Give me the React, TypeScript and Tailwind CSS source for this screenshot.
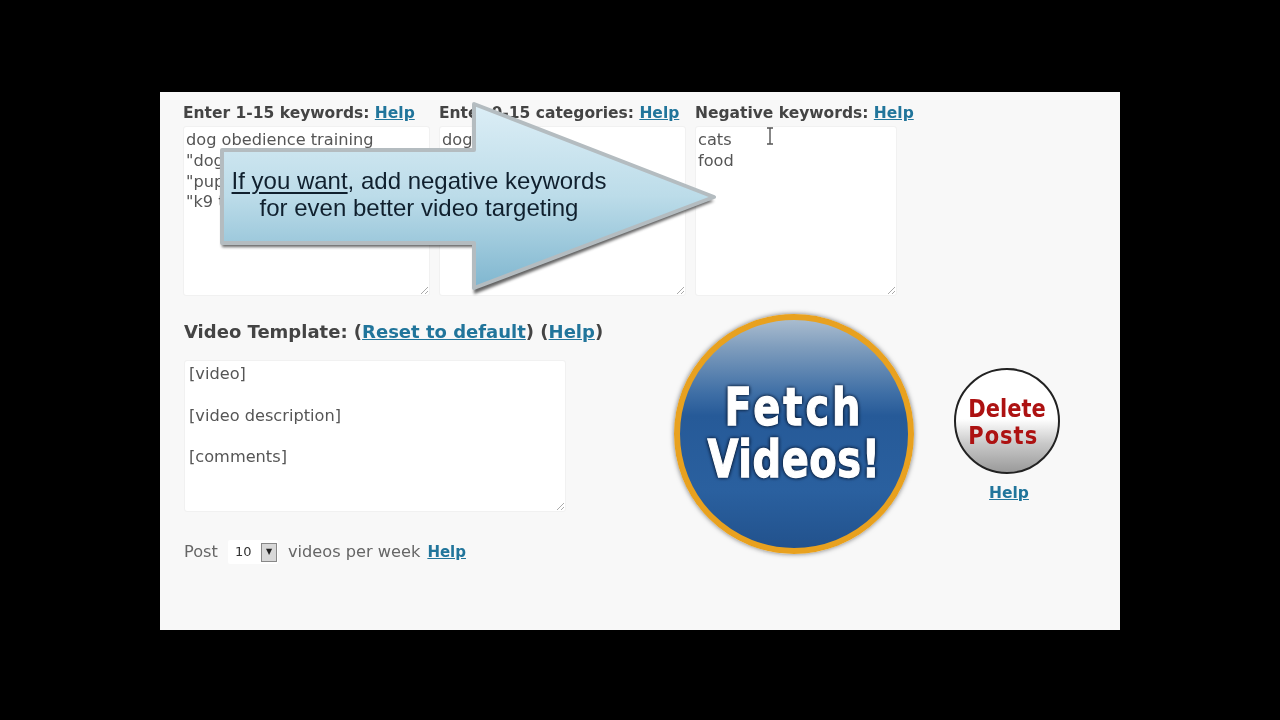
const HelpLink = ({ className = '' }: { className?: string }) => (
  <a className={`text-[#21759b] underline ${className}`}>Help</a>
)

const ResizeGrip = () => (
  <svg width="10" height="10" viewBox="0 0 10 10" className="absolute bottom-[1px] right-[1px]">
    <path d="M2 9 L9 2 M6 9 L9 6" stroke="#aaa" strokeWidth="1" />
  </svg>
)

const KeywordBox: React.FC<{ label: string, value: string, width: string }> = ({ label, value, width }) => (
  <div className={`flex flex-col ${width}`}>
    <div className="h-[24px] text-[15.5px] font-bold leading-[22px] whitespace-nowrap text-[#444]">
      {label}: <HelpLink />
    </div>
    <div className="relative h-[170px] w-full">
      <textarea
        readOnly
        defaultValue={value}
        className="block h-full w-full resize-none rounded-[3px] border border-[#f1f1f1] bg-white px-[2px] py-[3px] text-[16.2px] leading-[20.8px] text-[#555] outline-none"
      />
      <ResizeGrip />
    </div>
  </div>
)

const CalloutArrow = () => (
  <div className="absolute left-[56px] top-[8px] h-[204px] w-[510px]">
    <svg width="510" height="204" viewBox="0 0 510 204" className="block">
      <defs>
        <linearGradient id="arrowFill" x1="0" y1="0" x2="0" y2="1">
          <stop offset="0" stopColor="#dceef6" />
          <stop offset="0.5" stopColor="#bcdce9" />
          <stop offset="1" stopColor="#7fb6cf" />
        </linearGradient>
      </defs>
      <path d="M6 52 H258 V6 L498 97 L258 190 V143 H6 Z" fill="#222" opacity="0.7" transform="translate(0 4)" className="blur-[1.5px]" />
      <path d="M6 50 H258 V4 L498 97 L258 188 V143 H6 Z" fill="url(#arrowFill)" stroke="#b4bcc0" strokeWidth="4" strokeLinejoin="round" />
    </svg>
    <div className="absolute left-[8px] top-[67px] w-[390px] text-center font-['Liberation_Sans',sans-serif] text-[24px] leading-[27px] whitespace-nowrap text-[#10202e]">
      <div><span className="underline decoration-[2px] underline-offset-[3px]">If you want</span>, add negative keywords</div>
      <div>for even better video targeting</div>
    </div>
  </div>
)

const TextCursor = () => (
  <svg width="10" height="18" viewBox="0 0 10 18" className="absolute left-[605px] top-[35px]">
    <path d="M2 1 H8 M5 1 V17 M2 17 H8" stroke="#555" strokeWidth="1.4" fill="none" />
  </svg>
)

const FetchButton = () => (
  <div className="flex h-[240px] w-[240px] shrink-0 flex-col items-center justify-center rounded-full border-[6px] border-[#e8a11f] bg-[linear-gradient(180deg,#a9bccf_0%,#7f9dbd_12%,#3f6fa6_32%,#265a98_42%,#2a609f_75%,#22528d_100%)] shadow-[0_0_5px_#777]">
    <div className="scale-y-[1.27] text-center text-[40px] font-bold leading-[41px] text-white [-webkit-text-stroke:1px_#ffffff] [text-shadow:0_0_3px_#0b1d38,0_0_3px_#0b1d38,0_0_4px_#0b1d38]">
      <div className="tracking-[3px]">Fetch</div>
      <div className="tracking-[0.5px]">Videos!</div>
    </div>
  </div>
)

const DeleteButton = () => (
  <div className="flex flex-col items-center">
    <div className="flex h-[106px] w-[106px] flex-col items-center justify-center rounded-full border-2 border-[#222] bg-[linear-gradient(180deg,#ffffff_0%,#ffffff_48%,#c9c9c9_72%,#9a9a9a_100%)] pt-[3px]">
      <div className="scale-y-[1.18] text-[21px] font-bold leading-[23px] text-[#ad1212]">
        <div>Delete</div>
        <div className="tracking-[1px]">Posts</div>
      </div>
    </div>
    <HelpLink className="mt-[8px] ml-[4px] text-[15.5px] font-bold leading-[22px]" />
  </div>
)

export default function App() {
  return (
    <div className="h-[720px] w-[1280px] overflow-hidden bg-black pt-[92px] font-['DejaVu_Sans',sans-serif]">
      <div className="relative mx-auto flex h-[538px] w-[960px] flex-col bg-[#f8f8f8] pl-[23px] pt-[10px] blur-[0.4px]">
        <div className="flex gap-[9px]">
          <KeywordBox label="Enter 1-15 keywords" width="w-[247px]" value={'dog obedience training\n"dog training"\n"puppy training"\n"k9 training"'} />
          <KeywordBox label="Enter 0-15 categories" width="w-[247px]" value="dog" />
          <KeywordBox label="Negative keywords" width="w-[202px]" value={'cats\nfood'} />
        </div>

        <div className="mt-[18px] ml-[1px] flex items-start">
          <div className="w-[490px] shrink-0">
            <div className="mt-[6px] h-[40px] text-[18px] font-bold leading-[24px] whitespace-nowrap text-[#444]">
              Video Template: (<a className="text-[#21759b] underline">Reset to default</a>) (<a className="text-[#21759b] underline">Help</a>)
            </div>
            <div className="relative h-[152px] w-[382px]">
              <textarea
                readOnly
                defaultValue={'[video]\n\n[video description]\n\n[comments]'}
                className="block h-full w-full resize-none rounded-[3px] border border-[#f1f1f1] bg-white px-[4px] py-[3px] text-[16.2px] leading-[20.8px] text-[#555] outline-none"
              />
              <ResizeGrip />
            </div>
            <div className="mt-[28px] flex items-center text-[16.2px] leading-[24px] text-[#666]">
              <span className="w-[35px]">Post</span>
              <div className="ml-[9px] flex h-[24px] w-[50px] items-center justify-between rounded-[2px] bg-white pl-[7px] pr-[1px] text-[13px] text-[#333]">
                <span>10</span>
                <span className="flex h-[19px] w-[16px] items-center justify-center border border-[#888] bg-[#d8d8d8] text-[8px] leading-none text-[#222]">▼</span>
              </div>
              <span className="ml-[10px]">videos per week</span>
              <HelpLink className="ml-[7px] text-[15px] font-bold" />
            </div>
          </div>
          <FetchButton />
          <div className="ml-[40px] mt-[54px]">
            <DeleteButton />
          </div>
        </div>

        <CalloutArrow />
        <TextCursor />
      </div>
    </div>
  )
}
